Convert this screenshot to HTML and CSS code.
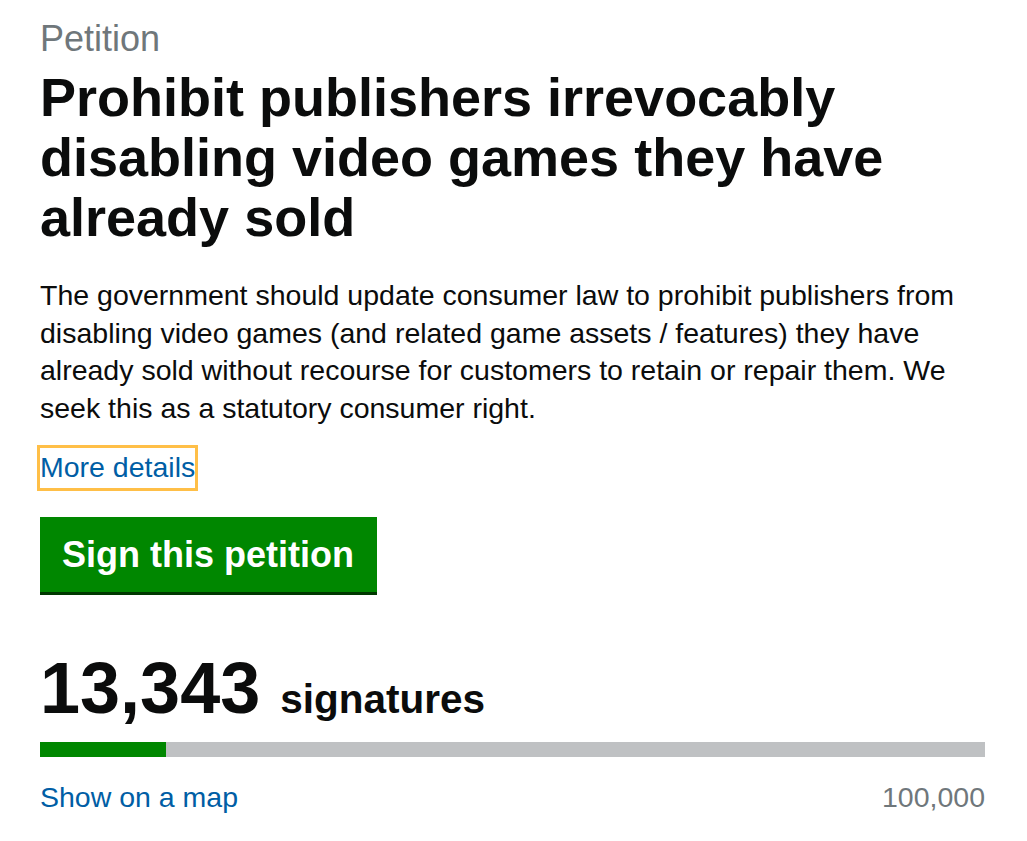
FILE: index.html
```html
<!DOCTYPE html>
<html lang="en">
<head>
<meta charset="utf-8">
<title>Petition</title>
<link rel="stylesheet" href="styles.css">
</head>
<body>
<main class="petition">
  <span class="caption">Petition</span>
  <h1 class="title">Prohibit publishers irrevocably disabling video games they have already sold</h1>
  <p class="summary">The government should update consumer law to prohibit publishers from disabling video games (and related game assets / features) they have already sold without recourse for customers to retain or repair them. We seek this as a statutory consumer right.</p>
  <div class="more"><a class="link link-focus" href="#details">More details</a></div>
  <div class="actions"><a class="button" href="#sign">Sign this petition</a></div>
  <div class="count">
    <span class="count-number">13,343</span>
    <span class="count-label">signatures</span>
  </div>
  <div class="progress"><div class="progress-fill" style="width: 13.343%"></div></div>
  <div class="progress-foot">
    <a class="link" href="#map">Show on a map</a>
    <span class="target">100,000</span>
  </div>
</main>
</body>
</html>
```
FILE: styles.css
```css
html, body {
  margin: 0;
  padding: 0;
  background: #ffffff;
}
body {
  font-family: "Liberation Sans", Arial, sans-serif;
  color: #0b0c0c;
}
.petition {
  padding: 19px 42px 0 40px;
}
.caption {
  display: block;
  font-size: 36px;
  line-height: 40px;
  color: #6f777b;
}
.title {
  margin: 8px 0 0;
  font-size: 54px;
  line-height: 60px;
  font-weight: bold;
}
.summary {
  margin: 30px 0 0;
  font-size: 28.5px;
  line-height: 37.5px;
}
.more {
  display: flex;
  align-items: flex-start;
  margin-top: 21px;
  font-size: 28.5px;
}
.link {
  color: #005ea5;
  text-decoration: none;
}
.link-focus {
  line-height: 36px;
  padding: 1px 0 3px;
  outline: 3px solid #ffbf47;
  outline-offset: 0;
}
.actions {
  display: flex;
  margin-top: 29px;
}
.button {
  display: block;
  padding: 18px 23px 17px 22px;
  background: #008700;
  box-shadow: 0 3px 0 #003800;
  color: #ffffff;
  font-size: 36px;
  line-height: 40px;
  font-weight: bold;
  text-decoration: none;
}
.count {
  display: flex;
  align-items: baseline;
  gap: 20px;
  margin-top: 56px;
}
.count-number {
  font-size: 72px;
  line-height: 80px;
  font-weight: bold;
}
.count-label {
  font-size: 40.5px;
  font-weight: bold;
}
.progress {
  margin-top: 14px;
  height: 15px;
  background: #bfc1c3;
}
.progress-fill {
  height: 100%;
  background: #008700;
}
.progress-foot {
  display: flex;
  justify-content: space-between;
  margin-top: 22px;
  font-size: 28.5px;
  line-height: 37.5px;
}
.target {
  color: #6f777b;
}
```
